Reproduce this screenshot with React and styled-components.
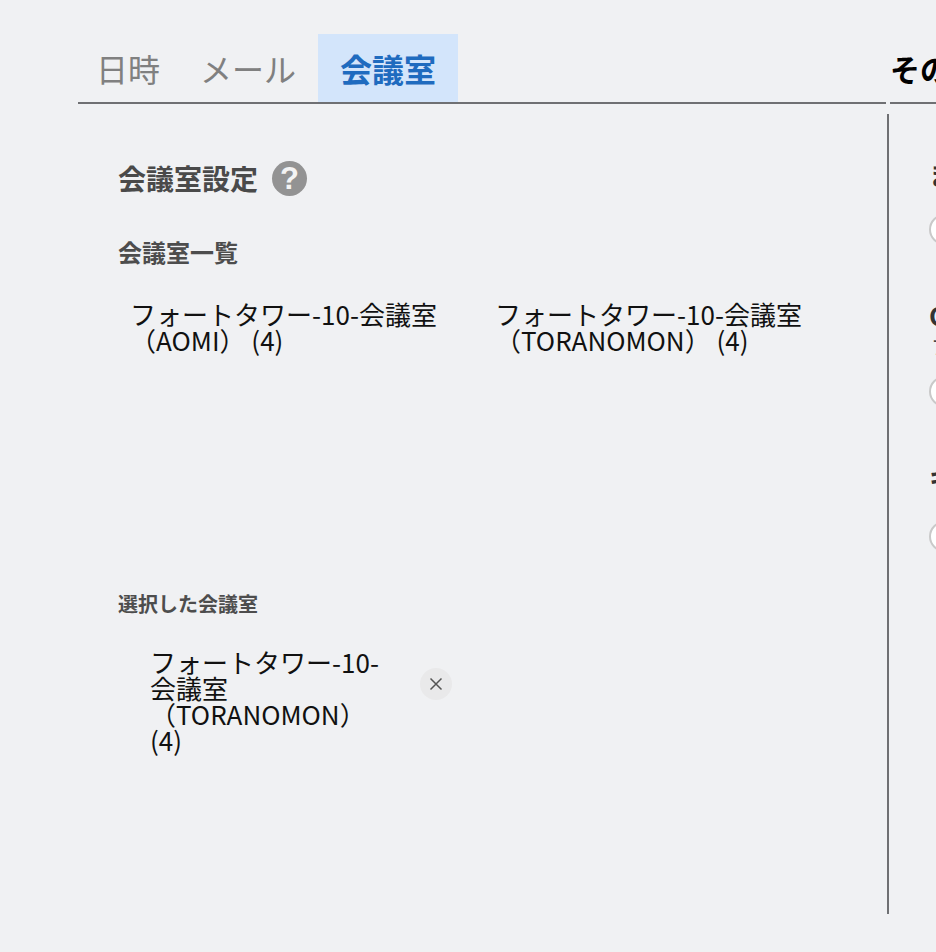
import React from "react";
import styled, { createGlobalStyle } from "styled-components";

const Global = createGlobalStyle`
  html, body { margin: 0; padding: 0; background: #f0f1f3; }
  body { width: 936px; height: 952px; overflow: hidden; font-family: "Noto Sans CJK JP", "Noto Sans", sans-serif; }
`;
const Page = styled.div`
  display: grid;
  grid-template-columns: 808px 1fr;
  column-gap: 4px;
  width: 1100px;
  padding: 34px 0 0 78px;
  box-sizing: border-box;
`;
const Left = styled.section`display: flex; flex-direction: column;`;
const Tabs = styled.div`
  display: flex;
  height: 68px;
  border-bottom: 2px solid #6f7073;
  box-sizing: content-box;
`;
const Tab = styled.div`
  display: flex;
  align-items: center;
  justify-content: center;
  height: 68px;
  padding: 0 22px;
  font-size: 32px;
  font-weight: ${p => (p.$active ? 700 : 400)};
  color: ${p => (p.$active ? "#1f6bbf" : "#808080")};
  background: ${p => (p.$active ? "#d3e5fb" : "transparent")};
`;
const TabPlain = styled(Tab)`padding: 0 ${p => p.$right}px 0 ${p => p.$left}px;`;
const Panel = styled.div`
  height: 800px;
  margin-top: 10px;
  padding: 44px 0 0 40px;
  border-right: 2px solid #6f7073;
  box-sizing: border-box;
  width: 811px;
`;
const TitleRow = styled.div`display: flex; align-items: center; gap: 14px; height: 40px;`;
const Title = styled.h2`margin: 0; font-size: 28px; font-weight: 700; color: #4a4a4a; line-height: 40px;`;
const Help = styled.span`
  display: flex;
  align-items: center;
  justify-content: center;
  width: 35px;
  height: 35px;
  border-radius: 50%;
  background: #939393;
  color: #f4f4f4;
  font: 700 31px/35px "Liberation Sans", sans-serif;
`;
const Sub = styled.h3`
  margin: ${p => p.$top}px 0 0;
  font-size: ${p => p.$size}px;
  font-weight: 700;
  color: #4d4d4d;
  line-height: 30px;
`;
const Rooms = styled.div`display: flex; margin-top: 34px; padding-left: 12px; gap: 58px; height: 288px;`;
const Room = styled.div`width: 307px; font-size: 26px; line-height: 26px; color: #111;`;
const Selected = styled.div`display: flex; align-items: flex-start; margin-top: 30px; padding-left: 32px;`;
const SelectedName = styled.div`width: 235px; font-size: 26px; line-height: 26px; color: #111;`;
const Close = styled.span`
  display: flex;
  align-items: center;
  justify-content: center;
  width: 32px;
  height: 32px;
  margin: 19px 0 0 35px;
  border-radius: 50%;
  background: #e9e9ea;
`;
const Right = styled.aside`display: flex; flex-direction: column;`;
const RightHead = styled.div`
  height: 68px;
  border-bottom: 2px solid #6f7073;
  font-size: 30px;
  font-weight: 700;
  color: #000;
  display: flex;
  align-items: center;
`;
const RightBody = styled.div`padding: 54px 0 0 39px; display: flex; flex-direction: column;`;
const Opt = styled.div`display: flex; flex-direction: column; margin-top: ${p => p.$top}px;`;
const OptLabel = styled.div`font-size: 26px; font-weight: 700; color: #333; line-height: 32px; white-space: nowrap;`;
const OptSub = styled.div`font-size: 20px; color: #444; line-height: 26px; margin-top: 3px; padding-left: 2px; white-space: nowrap;`;
const Radio = styled.span`
  display: block;
  width: 27px;
  height: 27px;
  margin-top: ${p => p.$top}px;
  border: 2px solid #c9c9c9;
  border-radius: 50%;
  background: #fff;
`;

export default function App() {
  return (
    <>
      <Global />
      <Page>
        <Left>
          <Tabs>
            <TabPlain $left={18} $right={18}>日時</TabPlain>
            <TabPlain $left={22} $right={22}>メール</TabPlain>
            <Tab $active>会議室</Tab>
          </Tabs>
          <Panel>
            <TitleRow>
              <Title>会議室設定</Title>
              <Help>?</Help>
            </TitleRow>
            <Sub $top={39} $size={24}>会議室一覧</Sub>
            <Rooms>
              <Room>フォートタワー-10-会議室（AOMI） (4)</Room>
              <Room>フォートタワー-10-会議室（TORANOMON） (4)</Room>
            </Rooms>
            <Sub $top={0} $size={20}>選択した会議室</Sub>
            <Selected>
              <SelectedName>フォートタワー-10-会議室（TORANOMON） (4)</SelectedName>
              <Close>
                <svg width="14" height="14" viewBox="0 0 14 14" fill="none" stroke="#555" strokeWidth="1.5"><path d="M1.5 1.5l11 11M12.5 1.5l-11 11" /></svg>
              </Close>
            </Selected>
          </Panel>
        </Left>
        <Right>
          <RightHead>その他の設定</RightHead>
          <RightBody>
            <Opt $top={0}>
              <OptLabel>ま</OptLabel>
              <Radio $top={24} />
            </Opt>
            <Opt $top={54}>
              <OptLabel>Outlook</OptLabel>
              <OptSub>フ</OptSub>
              <Radio $top={16} />
            </Opt>
            <Opt $top={54}>
              <OptLabel>キャンセル</OptLabel>
              <Radio $top={28} />
            </Opt>
          </RightBody>
        </Right>
      </Page>
    </>
  );
}
